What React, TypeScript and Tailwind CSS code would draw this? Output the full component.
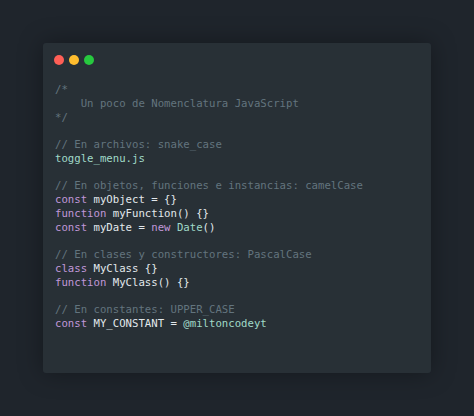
const C = ({ children }: { children: React.ReactNode }) => <span className="text-[#63747e]">{children}</span>;
const K = ({ children }: { children: React.ReactNode }) => <span className="text-[#c097d9]">{children}</span>;
const T = ({ children }: { children: React.ReactNode }) => <span className="text-[#a0dac8]">{children}</span>;

export default function App() {
  return (
    <div className="w-[474px] h-[416px] bg-[#1f252c] flex items-center justify-center">
      <div className="w-[388px] h-[330px] bg-[#283036] rounded-[3px] shadow-[0_0_24px_rgba(0,0,0,0.35)] px-3 pt-3">
        <div className="flex gap-[5px] -ml-[1px]">
          <span className="w-[10px] h-[10px] rounded-full bg-[#ff5f56]" />
          <span className="w-[10px] h-[10px] rounded-full bg-[#ffbd2e]" />
          <span className="w-[10px] h-[10px] rounded-full bg-[#27c93f]" />
        </div>
        <pre className="mt-[18px] font-['DejaVu_Sans_Mono',monospace] text-[10.67px] leading-[13.75px] text-[#e2e8ec]">
<C>{"/*\n    Un poco de Nomenclatura JavaScript\n*/"}</C>{"\n\n"}
<C>{"// En archivos: snake_case"}</C>{"\n"}
<T>{"toggle_menu.js"}</T>{"\n\n"}
<C>{"// En objetos, funciones e instancias: camelCase"}</C>{"\n"}
<K>const</K>{" myObject = {}\n"}
<K>function</K>{" myFunction() {}\n"}
<K>const</K>{" myDate = "}<K>new</K>{" "}<T>Date</T>{"()\n\n"}
<C>{"// En clases y constructores: PascalCase"}</C>{"\n"}
<K>class</K>{" MyClass {}\n"}
<K>function</K>{" MyClass() {}\n\n"}
<C>{"// En constantes: UPPER_CASE"}</C>{"\n"}
<K>const</K>{" MY_CONSTANT = "}<T>@miltoncodeyt</T>
        </pre>
      </div>
    </div>
  );
}
